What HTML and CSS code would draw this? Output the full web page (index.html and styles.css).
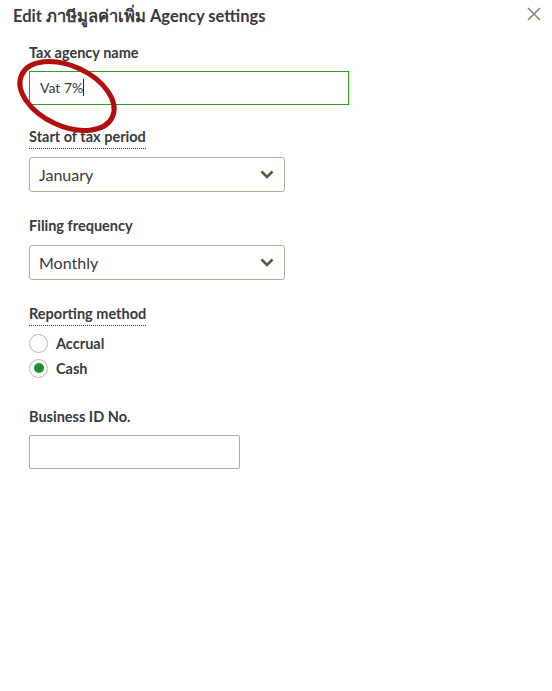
FILE: index.html
```html
<!DOCTYPE html>
<html lang="en">
<head>
    <meta charset="UTF-8">
    <title>Edit Agency settings</title>
    <link rel="stylesheet" href="styles.css">
</head>
<body>
    <div class="panel">
        <div class="panel-header">
            <h2>Edit ภาษีมูลค่าเพิ่ม Agency settings</h2>
            <button class="close-btn" aria-label="Close">
                <svg width="14" height="14" viewBox="0 0 14 14">
                    <path d="M1 1 L13 13 M13 1 L1 13" stroke="#8d8470" stroke-width="1.6" fill="none"/>
                </svg>
            </button>
        </div>

        <form class="settings-form">
            <!-- Agency name -->
            <div class="field field-name">
                <label class="field-label">Tax agency name</label>
                <div class="text-input wide focused">Vat 7%<span class="caret"></span></div>
                <svg class="mark" width="120" height="80" viewBox="0 0 120 80">
                    <ellipse cx="60" cy="40" rx="50" ry="30" transform="rotate(25 60 40)" stroke="#b30d0d" stroke-width="5" fill="none"/>
                </svg>
            </div>

            <!-- Start of period -->
            <div class="field">
                <label class="field-label dotted">Start of tax period</label>
                <div class="select-box">
                    <span>January</span>
                    <svg width="14" height="9" viewBox="0 0 14 9"><path d="M1.5 1.5 L7 7 L12.5 1.5" stroke="#5d574b" stroke-width="2.6" fill="none"/></svg>
                </div>
            </div>

            <!-- Frequency -->
            <div class="field">
                <label class="field-label">Filing frequency</label>
                <div class="select-box">
                    <span>Monthly</span>
                    <svg width="14" height="9" viewBox="0 0 14 9"><path d="M1.5 1.5 L7 7 L12.5 1.5" stroke="#5d574b" stroke-width="2.6" fill="none"/></svg>
                </div>
            </div>

            <!-- Method -->
            <div class="field field-radio">
                <label class="field-label dotted">Reporting method</label>
                <div class="radio-list">
                    <div class="radio-row"><span class="radio"></span>Accrual</div>
                    <div class="radio-row"><span class="radio checked"></span>Cash</div>
                </div>
            </div>

            <!-- Business ID -->
            <div class="field">
                <label class="field-label">Business ID No.</label>
                <div class="text-input narrow"></div>
            </div>
        </form>
    </div>
</body>
</html>
```

FILE: styles.css
```css
body {
    margin: 0;
    background: #fff;
    font-family: 'Lato', 'Noto Sans', sans-serif;
    color: #393a3d;
}

.panel {
    width: 552px;
    height: 691px;
    box-sizing: border-box;
    padding: 0 0 0 13px;
}

.panel-header {
    display: flex;
    justify-content: space-between;
    align-items: center;
    height: 32px;
    padding-right: 8px;
}

.panel-header h2 {
    margin: 0;
    font-size: 16.5px;
    font-weight: 700;
    color: #393a3d;
}

.close-btn {
    background: none;
    border: none;
    padding: 0;
    width: 20px;
    height: 20px;
    display: flex;
    align-items: center;
    justify-content: center;
    margin-top: -4px;
}

.settings-form {
    padding-left: 16px;
    padding-top: 10px;
}

.field {
    margin-bottom: 23px;
}

.field-name {
    position: relative;
    margin-bottom: 21px;
}

.field-radio {
    margin-bottom: 28px;
}

.field-label {
    display: inline-block;
    font-size: 14.5px;
    font-weight: 700;
    color: #393a3d;
    line-height: 18px;
    margin-bottom: 9px;
}

.field-label.dotted {
    border-bottom: 1px dotted #393a3d;
    padding-bottom: 2px;
    margin-bottom: 7px;
}

.text-input {
    box-sizing: border-box;
    height: 34px;
    border: 1px solid #b4ab9b;
    border-radius: 2px;
    font-size: 14px;
    line-height: 32px;
    padding-left: 10px;
    color: #393a3d;
}

.text-input.wide {
    width: 320px;
}

.text-input.focused {
    border-color: #2ca01c;
    border-radius: 0;
}

.text-input.narrow {
    width: 211px;
}

.caret {
    display: inline-block;
    width: 1px;
    height: 17px;
    background: #222;
    vertical-align: -3px;
}

.mark {
    position: absolute;
    left: -22px;
    top: 14px;
    pointer-events: none;
}

.select-box {
    box-sizing: border-box;
    width: 256px;
    height: 35px;
    margin-top: 1px;
    border: 1px solid #b4ab9b;
    border-radius: 3px;
    display: flex;
    align-items: center;
    justify-content: space-between;
    padding: 0 10px 0 9px;
    font-size: 16px;
    color: #393a3d;
}

.radio-list {
    display: flex;
    flex-direction: column;
    gap: 5px;
}

.radio-row {
    display: flex;
    align-items: center;
    gap: 8px;
    font-size: 14.5px;
    font-weight: 700;
    height: 20px;
}

.radio {
    box-sizing: border-box;
    width: 19px;
    height: 19px;
    border: 1px solid #c2b8a5;
    border-radius: 50%;
    display: flex;
    align-items: center;
    justify-content: center;
}

.radio.checked::after {
    content: "";
    width: 10px;
    height: 10px;
    border-radius: 50%;
    background: #1e8f2d;
}
```
